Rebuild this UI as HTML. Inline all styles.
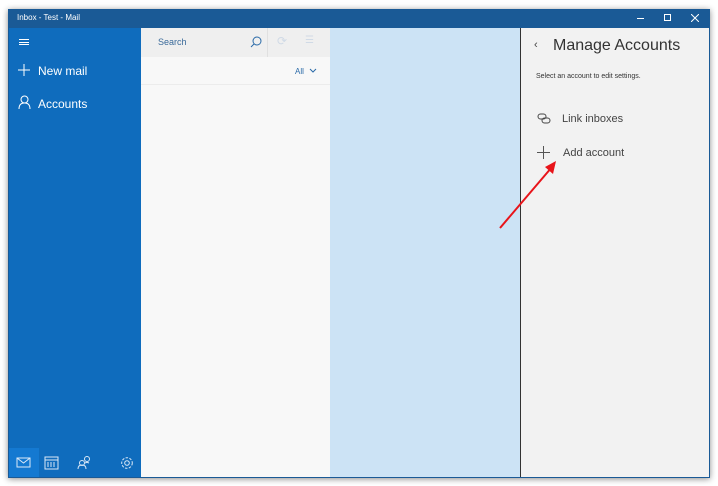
<!DOCTYPE html><html><head><style>
body{margin:0;width:718px;height:486px;background:#fff;position:relative;overflow:hidden;font-family:"Liberation Sans",sans-serif}
div{position:absolute;box-sizing:border-box}
.t{white-space:nowrap}
</style></head><body>
<div style="left:8px;top:9px;width:702px;height:469px;box-shadow:0 1px 6px rgba(0,0,0,.45);background:#1a5a96"></div>
<div style="left:9px;top:9px;width:700px;height:19px;background:#1a5a96"></div>
<div class="t" style="left:17px;top:13px;font-size:8px;color:#fff">Inbox - Test - Mail</div>
<div style="left:637px;top:18px;width:7px;height:1px;background:#fff"></div>
<div style="left:664px;top:14px;width:7px;height:7px;border:1px solid #fff"></div>
<svg style="position:absolute;left:691px;top:14px" width="8" height="8" stroke="#fff"><path d="M0 0L8 8M8 0L0 8"/></svg>
<div style="left:9px;top:28px;width:132px;height:449px;background:#0f6cbd"></div>
<div style="left:19px;top:39px;width:10px;height:6px;border-top:1px solid #fff;border-bottom:1px solid #fff"></div>
<div style="left:19px;top:41.5px;width:10px;height:1px;background:#fff"></div>
<svg style="position:absolute;left:18px;top:64px" width="12" height="12" stroke="#fff"><path d="M6 0V12M0 6H12"/></svg>
<div class="t" style="left:38px;top:64px;font-size:12px;color:#fff">New mail</div>
<svg style="position:absolute;left:18px;top:95px" width="13" height="14"><circle cx="6.5" cy="4.5" r="3.5" fill="none" stroke="#fff"/><path d="M1 14 Q1 8 6.5 8 Q12 8 12 14" fill="none" stroke="#fff"/></svg>
<div class="t" style="left:38px;top:97px;font-size:12px;color:#fff">Accounts</div>
<div style="left:9px;top:448px;width:30px;height:29px;background:#1479d1"></div>
<svg style="position:absolute;left:16px;top:455px" width="125" height="16" fill="none" stroke="#dbe9f7"><rect x="1" y="3" width="13" height="9"/><path d="M1 3 L7.5 8 L14 3"/><rect x="29" y="2" width="13" height="12"/><path d="M29 5H42M32 7v5M35 7v5M38 7v5"/><circle cx="66" cy="8" r="2.5"/><path d="M62 14q0-4 4-4t4 4"/><circle cx="71" cy="4" r="2.5"/><path d="M69 8q2-1 4 0"/><circle cx="111" cy="8" r="2.3"/><circle cx="111" cy="8" r="5.3" stroke-dasharray="2.5 1.4"/></svg>
<div style="left:141px;top:28px;width:189px;height:449px;background:#f8f8f8"></div>
<div style="left:141px;top:28px;width:189px;height:29px;background:#efefef"></div>
<div style="left:267px;top:28px;width:1px;height:29px;background:#e0e0e0"></div>
<div class="t" style="left:158px;top:37px;font-size:9px;color:#3a6a9a">Search</div>
<svg style="position:absolute;left:250px;top:36px" width="12" height="12" fill="none" stroke="#2a6aa8"><circle cx="7" cy="5" r="4"/><path d="M4 8L1 11"/></svg>
<div class="t" style="left:277px;top:34px;font-size:12px;color:#d0dae6">⟳</div>
<div class="t" style="left:305px;top:35px;font-size:10px;color:#d0dae6">☰</div>
<div style="left:141px;top:84px;width:189px;height:1px;background:#ececec"></div>
<div class="t" style="left:295px;top:67px;font-size:8px;color:#2a6aa8">All</div>
<svg style="position:absolute;left:309px;top:68px" width="8" height="6" fill="none" stroke="#2a6aa8"><path d="M1 1L4 4L7 1"/></svg>
<div style="left:330px;top:28px;width:190px;height:449px;background:#cce3f5"></div>
<div style="left:520px;top:28px;width:189px;height:449px;background:#f2f2f2;border-left:1px solid #333"></div>
<div class="t" style="left:534px;top:39px;font-size:11px;color:#444">‹</div>
<div class="t" style="left:553px;top:37px;font-size:16px;color:#333">Manage Accounts</div>
<div class="t" style="left:536px;top:73px;font-size:7px;color:#333">Select an account to edit settings.</div>
<svg style="position:absolute;left:537px;top:113px" width="14" height="11" fill="none" stroke="#444"><rect x="1" y="1" width="8" height="5" rx="2.5"/><rect x="5" y="5" width="8" height="5" rx="2.5"/></svg>
<div class="t" style="left:562px;top:113px;font-size:11px;color:#444">Link inboxes</div>
<svg style="position:absolute;left:537px;top:146px" width="13" height="13" stroke="#555"><path d="M6.5 0V13M0 6.5H13"/></svg>
<div class="t" style="left:563px;top:147px;font-size:11px;color:#444">Add account</div>
<svg style="position:absolute;left:495px;top:155px" width="70" height="80"><path d="M5 73L57 12" stroke="#e8141a" stroke-width="2"/><path d="M61 6L50 12L58 19Z" fill="#e8141a"/></svg>
</body></html>
